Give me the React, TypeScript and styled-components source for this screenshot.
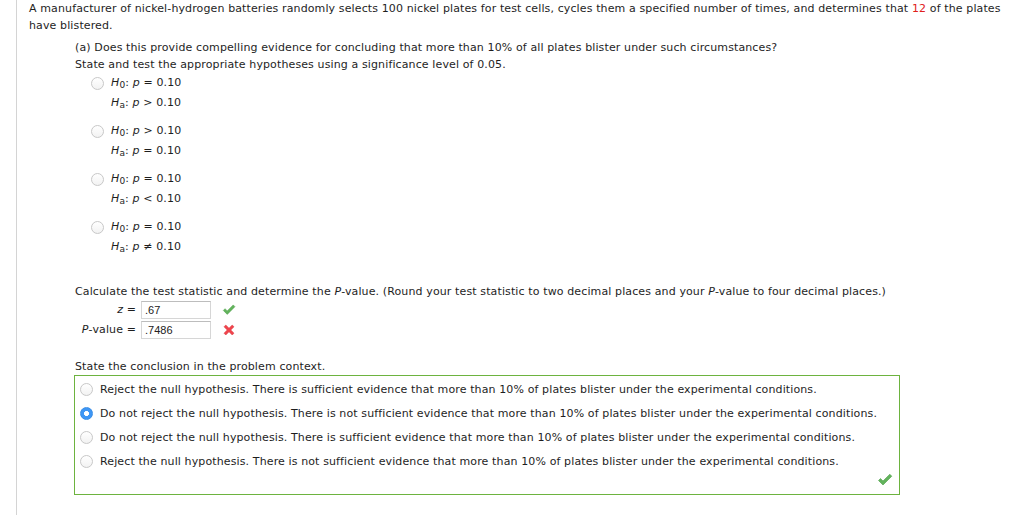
import React from 'react';
import styled, { createGlobalStyle } from 'styled-components';

const GlobalStyle = createGlobalStyle`
  html, body {
    margin: 0;
    padding: 0;
    background: #fff;
  }
  body {
    font-family: 'DejaVu Sans', Verdana, sans-serif;
    font-size: 11px;
    letter-spacing: 0.12px;
    color: #1e1e1e;
  }
`;

const Page = styled.div`
  margin-left: 16px;
  border-left: 1px solid #d4d4d4;
  min-height: 515px;
  box-sizing: border-box;
  padding: 0 0 0 12px;
`;

const Intro = styled.p`
  margin: 0;
  line-height: 17px;
  width: 985px;
`;

const Red = styled.span`
  color: #e0201c;
`;

const Part = styled.div`
  padding-left: 46px;
  padding-top: 5px;
`;

const Line = styled.div`
  line-height: 17px;
`;

const HypList = styled.div`
  display: flex;
  flex-direction: column;
  gap: 8px;
  padding-left: 16px;
`;

const HypOption = styled.div`
  display: flex;
  align-items: flex-start;
`;

const HypLines = styled.div`
  display: flex;
  flex-direction: column;
  padding-left: 7px;
`;

const HypLine = styled.div`
  line-height: 20px;
  height: 20px;
`;

const Radio = styled.span<{ $checked?: boolean; $top?: number }>`
  box-sizing: border-box;
  display: inline-block;
  flex: none;
  width: 13px;
  height: 13px;
  border-radius: 50%;
  margin-top: ${(p) => p.$top ?? 0}px;
  border: 1px solid ${(p) => (p.$checked ? '#3a8ee6' : '#c8c8c8')};
  background: ${(p) =>
    p.$checked
      ? 'radial-gradient(circle, #fff 0 2.2px, #3d96f5 2.8px)'
      : 'linear-gradient(#fff, #f2f2f2)'};
`;

const I = styled.i`
  font-style: italic;
`;

const Sub = styled.sub`
  font-size: 9px;
  vertical-align: -2px;
  line-height: 0;
`;

const Section = styled.div`
  margin-top: 26px;
`;

const AnswerGrid = styled.div`
  display: grid;
  grid-template-columns: 61px 70px 20px;
  grid-auto-rows: 18px;
  column-gap: 5px;
  row-gap: 2px;
  align-items: center;
  margin-top: 1px;
`;

const Label = styled.span`
  text-align: right;
  line-height: 18px;
`;

const Input = styled.div`
  box-sizing: border-box;
  height: 18px;
  border: 1px solid #d6d6d6;
  border-top-color: #bdbdbd;
  padding: 0 3px;
  font-family: 'Liberation Sans', Arial, sans-serif;
  font-size: 11px;
  letter-spacing: 0;
  line-height: 16px;
  color: #222;
`;

const Mark = styled.span`
  display: flex;
  align-items: center;
  height: 18px;
  padding-left: 6px;
`;

const Conclusion = styled.div`
  margin-top: 19px;
  width: 826px;
`;

const ChoiceBox = styled.div`
  box-sizing: border-box;
  margin-left: -1px;
  width: 826px;
  height: 120px;
  border: 1px solid #6db33f;
  padding: 1px 6px 0 5px;
  position: relative;
`;

const Choice = styled.label`
  display: flex;
  align-items: center;
  gap: 7px;
  height: 24px;
`;

const BoxCheck = styled.span`
  position: absolute;
  right: 6px;
  bottom: 4px;
`;

const Check = () => (
  <svg width="16" height="14" viewBox="0 0 16 14">
    <path
      d="M1.5 7.5 L3.5 5.5 L6 8 L12.8 1.2 L14.8 3.2 L6 12 Z"
      fill="#62b35c"
      stroke="#4f9f49"
      strokeWidth="0.6"
      strokeLinejoin="round"
    />
  </svg>
);

const Cross = () => (
  <svg width="14" height="14" viewBox="0 0 14 14">
    <path
      d="M2 3.8 L3.8 2 L7 5.2 L10.2 2 L12 3.8 L8.8 7 L12 10.2 L10.2 12 L7 8.8 L3.8 12 L2 10.2 L5.2 7 Z"
      fill="#f0444c"
      stroke="#d9353d"
      strokeWidth="0.5"
      strokeLinejoin="round"
    />
  </svg>
);

const H = ({ s }: { s: string }) => (
  <>
    <I>H</I>
    <Sub>{s}</Sub>
  </>
);

const hypotheses: [string, string][] = [
  ['=', '>'],
  ['>', '='],
  ['=', '<'],
  ['=', '\u2260'],
];

const choices = [
  'Reject the null hypothesis. There is sufficient evidence that more than 10% of plates blister under the experimental conditions.',
  'Do not reject the null hypothesis. There is not sufficient evidence that more than 10% of plates blister under the experimental conditions.',
  'Do not reject the null hypothesis. There is sufficient evidence that more than 10% of plates blister under the experimental conditions.',
  'Reject the null hypothesis. There is not sufficient evidence that more than 10% of plates blister under the experimental conditions.',
];

const App: React.FC = () => {
  return (
    <>
      <GlobalStyle />
      <Page>
        <Intro>
          A manufacturer of nickel-hydrogen batteries randomly selects 100 nickel plates for test
          cells, cycles them a specified number of times, and determines that <Red>12</Red> of the
          plates have blistered.
        </Intro>
        <Part>
          <Line>
            (a) Does this provide compelling evidence for concluding that more than 10% of all
            plates blister under such circumstances?
          </Line>
          <Line>State and test the appropriate hypotheses using a significance level of 0.05.</Line>
          <HypList>
            {hypotheses.map(([h0, ha], i) => (
              <HypOption key={i}>
                <Radio $top={4} />
                <HypLines>
                  <HypLine>
                    <H s="0" />: <I>p</I> {h0} 0.10
                  </HypLine>
                  <HypLine>
                    <H s="a" />: <I>p</I> {ha} 0.10
                  </HypLine>
                </HypLines>
              </HypOption>
            ))}
          </HypList>

          <Section>
            <Line>
              Calculate the test statistic and determine the <I>P</I>-value. (Round your test
              statistic to two decimal places and your <I>P</I>-value to four decimal places.)
            </Line>
            <AnswerGrid>
              <Label>
                <I>z</I> =
              </Label>
              <Input>.67</Input>
              <Mark>
                <Check />
              </Mark>
              <Label>
                <I>P</I>-value =
              </Label>
              <Input>.7486</Input>
              <Mark>
                <Cross />
              </Mark>
            </AnswerGrid>
          </Section>

          <Conclusion>
            <Line>State the conclusion in the problem context.</Line>
            <ChoiceBox>
              {choices.map((c, i) => (
                <Choice key={i}>
                  <Radio $checked={i === 1} />
                  <span>{c}</span>
                </Choice>
              ))}
              <BoxCheck>
                <Check />
              </BoxCheck>
            </ChoiceBox>
          </Conclusion>
        </Part>
      </Page>
    </>
  );
};

export default App;
